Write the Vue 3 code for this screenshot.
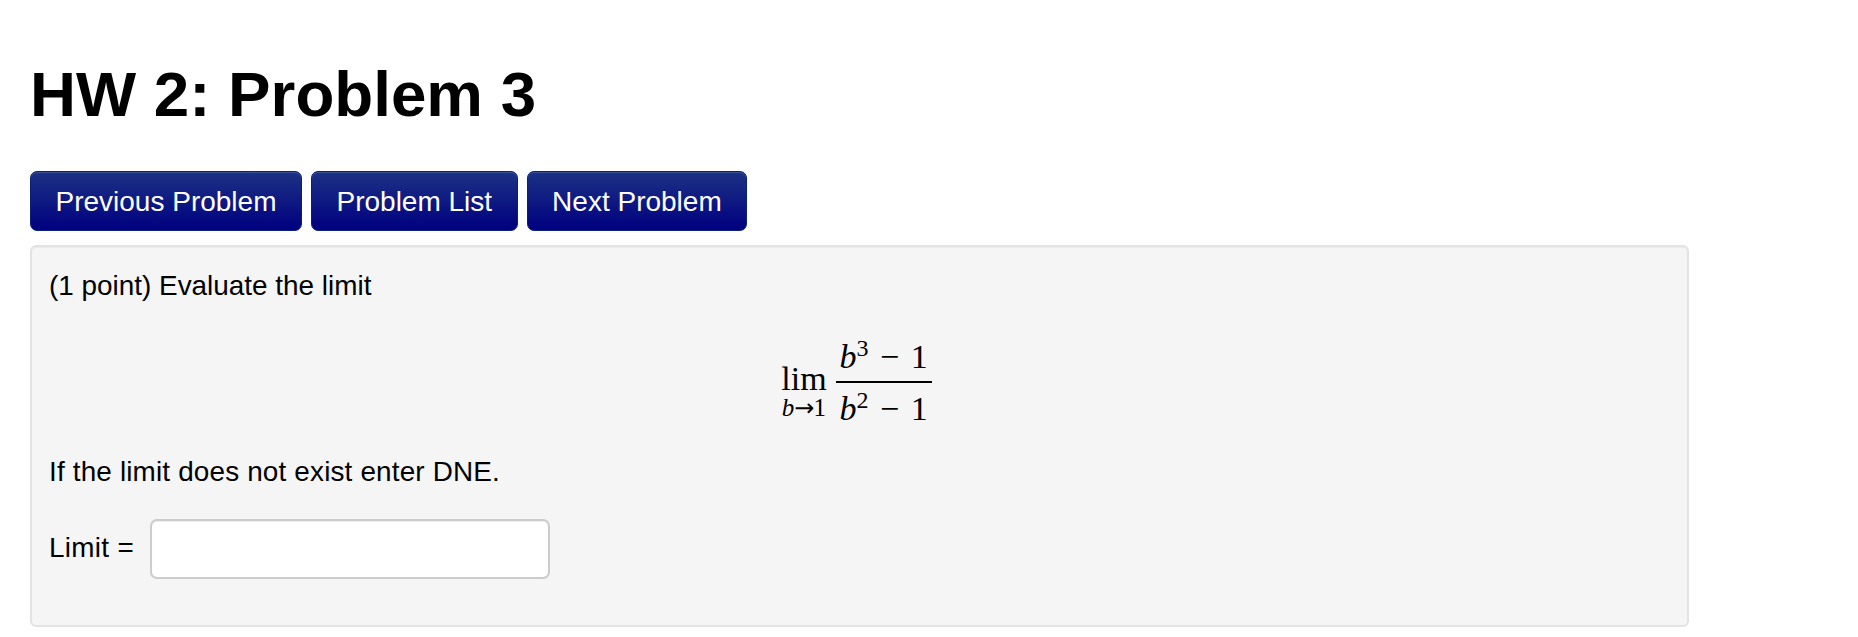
<script setup>
const buttons = ['Previous Problem', 'Problem List', 'Next Problem']
</script>

<template>
  <main class="page">
    <h1 class="title">HW 2: Problem 3</h1>
    <nav class="nav">
      <a v-for="b in buttons" :key="b" class="btn">{{ b }}</a>
    </nav>
    <section class="panel">
      <p class="line first">(1 point) Evaluate the limit</p>
      <div class="math">
        <div class="lim">
          <span class="lim-word">lim</span>
          <span class="lim-sub"><i>b</i><span class="arrow">→</span>1</span>
        </div>
        <div class="frac">
          <div class="num"><i>b</i><sup>3</sup><span class="minus">−</span>1</div>
          <div class="den"><i>b</i><sup>2</sup><span class="minus">−</span>1</div>
        </div>
      </div>
      <p class="line dne">If the limit does not exist enter DNE.</p>
      <div class="answer">
        <label class="label" for="limit">Limit =</label>
        <input id="limit" class="input" type="text" />
      </div>
    </section>
  </main>
</template>

<style scoped>
.page {
  width: 1858px;
  height: 637px;
  box-sizing: border-box;
  padding: 52px 0 0 30px;
  overflow: hidden;
  font-family: "Liberation Sans", Arial, sans-serif;
  color: #000;
  background: #fff;
}
.title {
  margin: 0;
  font-size: 63.7px;
  line-height: 84px;
  font-weight: 700;
}
.nav {
  display: flex;
  gap: 9px;
  margin-top: 35px;
}
.btn {
  display: flex;
  align-items: center;
  height: 60px;
  box-sizing: border-box;
  padding: 1px 24.5px 0;
  border-radius: 7px;
  font-size: 28px;
  color: #fff;
  background: linear-gradient(#1c3284, #000080);
  border: 1px solid #0a1f78;
  box-shadow: inset 0 1px 0 rgba(255, 255, 255, 0.15);
}
.panel {
  width: 1659px;
  height: 382px;
  box-sizing: border-box;
  margin-top: 14px;
  padding: 0 17px;
  background: #f5f5f5;
  border: 2px solid #e3e3e3;
  border-radius: 6px;
  box-shadow: inset 0 1px 1px rgba(0, 0, 0, 0.05);
}
.line {
  margin: 0;
  font-size: 27.9px;
  line-height: 36px;
}
.first {
  margin-top: 21px;
}
.math {
  display: flex;
  justify-content: center;
  align-items: center;
  gap: 9px;
  margin-top: 36px;
  transform: translateX(-3px);
  font-family: "Liberation Serif", "Times New Roman", serif;
  font-size: 34px;
  line-height: 1;
}
.lim {
  display: flex;
  flex-direction: column;
  align-items: center;
  margin-top: 18px;
}
.lim-word {
  line-height: 32px;
}
.lim-sub {
  font-size: 25px;
  line-height: 26px;
}
.arrow {
  font-family: "DejaVu Sans", sans-serif;
  font-size: 24px;
  letter-spacing: -1px;
}
.frac {
  display: flex;
  flex-direction: column;
  align-items: center;
}
.num {
  padding: 0 4px 7px;
  border-bottom: 2px solid #000;
  white-space: nowrap;
}
.den {
  padding: 9px 4px 0;
  white-space: nowrap;
}
.frac sup {
  font-size: 24px;
  line-height: 0;
  vertical-align: 12px;
}
.minus {
  margin: 0 11.5px;
}
.dne {
  margin-top: 28px;
  letter-spacing: 0.16px;
}
.answer {
  display: flex;
  align-items: center;
  gap: 16px;
  margin-top: 29px;
}
.label {
  font-size: 27.9px;
  letter-spacing: 0.3px;
  margin-top: -2px;
}
.input {
  width: 400px;
  height: 60px;
  box-sizing: border-box;
  background: #fff;
  border: 2px solid #cccccc;
  border-radius: 7px;
  outline: none;
  box-shadow: inset 0 1px 1px rgba(0, 0, 0, 0.075);
}
</style>
